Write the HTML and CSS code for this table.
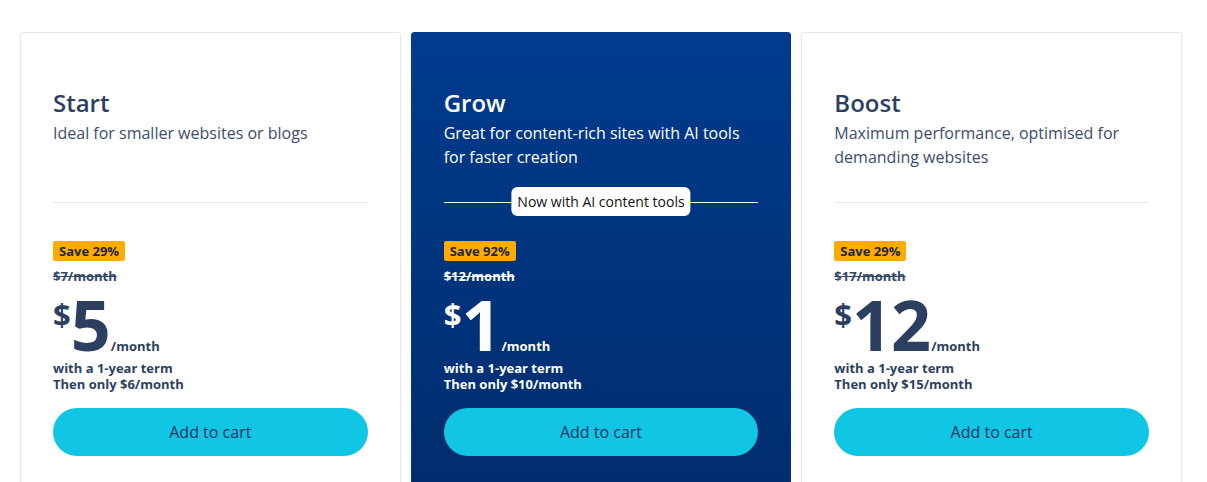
FILE: index.html
```html
<!DOCTYPE html>
<html lang="en">
<head>
<meta charset="utf-8">
<title>Plans</title>
<link rel="stylesheet" href="styles.css">
</head>
<body>
<main class="plans">
  <section class="card">
    <h3 class="title">Start</h3>
    <p class="desc">Ideal for smaller websites or blogs</p>
    <div class="divider"></div>
    <span class="badge">Save 29%</span>
    <p class="old">$7/month</p>
    <div class="price"><span class="cur">$</span><span class="amount">5</span><span class="per">/month</span></div>
    <p class="terms">with a 1-year term<br>Then only $6/month</p>
    <button class="cta">Add to cart</button>
  </section>
  <section class="card featured">
    <h3 class="title">Grow</h3>
    <p class="desc">Great for content-rich sites with AI tools for faster creation</p>
    <div class="divider labeled"><span class="tag">Now with AI content tools</span></div>
    <span class="badge">Save 92%</span>
    <p class="old">$12/month</p>
    <div class="price"><span class="cur">$</span><span class="amount">1</span><span class="per">/month</span></div>
    <p class="terms">with a 1-year term<br>Then only $10/month</p>
    <button class="cta">Add to cart</button>
  </section>
  <section class="card">
    <h3 class="title">Boost</h3>
    <p class="desc">Maximum performance, optimised for demanding websites</p>
    <div class="divider"></div>
    <span class="badge">Save 29%</span>
    <p class="old">$17/month</p>
    <div class="price"><span class="cur">$</span><span class="amount">12</span><span class="per">/month</span></div>
    <p class="terms">with a 1-year term<br>Then only $15/month</p>
    <button class="cta">Add to cart</button>
  </section>
</main>
</body>
</html>
```
FILE: styles.css
```css
html, body {
  margin: 0;
  padding: 0;
  background: #ffffff;
  font-family: "Open Sans", "Liberation Sans", sans-serif;
  color: #2c3f60;
  overflow: hidden;
}

.plans {
  display: grid;
  grid-template-columns: repeat(3, 1fr);
  gap: 10px;
  width: 1162px;
  padding: 32px 20px 0;
}

.card {
  display: flex;
  flex-direction: column;
  align-items: flex-start;
  padding: 55px 32px 60px;
  border: 1px solid #e6e8ec;
  border-radius: 3px;
  box-shadow: 0 1px 3px rgba(0, 0, 0, 0.06);
  background: #ffffff;
}

.featured {
  border-color: #003a8c;
  background: linear-gradient(180deg, #003b8e 0%, #002c6b 100%);
  color: #ffffff;
}

.title {
  margin: 0;
  font-size: 24px;
  line-height: 30px;
  font-weight: 600;
  color: #2c3f60;
}

.desc {
  margin: 3px 0 0;
  font-size: 16px;
  line-height: 24px;
  min-height: 48px;
  color: #3c4d6c;
}

.featured .title,
.featured .desc {
  color: #ffffff;
}

.divider {
  align-self: stretch;
  height: 1px;
  margin-top: 33px;
  background: #e6e8ec;
  position: relative;
}

.divider.labeled {
  background: #ffffff;
}

.tag {
  position: absolute;
  top: -15px;
  left: 50%;
  transform: translateX(-50%);
  background: #ffffff;
  color: #111111;
  font-size: 14px;
  line-height: 29px;
  padding: 0 6px;
  border-radius: 6px;
  white-space: nowrap;
}

.badge {
  margin-top: 38px;
  background: #ffab00;
  color: #1b2640;
  font-size: 13px;
  font-weight: 700;
  line-height: 20px;
  padding: 0 6px;
  border-radius: 2px;
}

.old {
  margin: 7px 0 0;
  font-size: 13px;
  font-weight: 700;
  line-height: 16px;
  text-decoration: line-through;
  color: #33476a;
}

.featured .old {
  color: #ffffff;
}

.price {
  display: flex;
  align-items: baseline;
  margin-top: 12px;
  font-weight: 700;
  color: #2c3f60;
}

.featured .price {
  color: #ffffff;
}

.cur {
  font-size: 31px;
  line-height: 1;
  align-self: flex-start;
  margin-top: 3px;
}

.amount {
  font-size: 70px;
  line-height: 56px;
  letter-spacing: -1px;
}

.per {
  font-size: 13px;
  line-height: 16px;
  margin-left: 1px;
}

.terms {
  margin: 6px 0 0;
  font-size: 13px;
  font-weight: 700;
  line-height: 16px;
  color: #2c3f60;
}

.featured .terms {
  color: #ffffff;
}

.cta {
  align-self: stretch;
  margin-top: 16px;
  height: 48px;
  border: none;
  border-radius: 24px;
  background: #11c6e4;
  color: #1b3262;
  font-family: "Open Sans", "Liberation Sans", sans-serif;
  font-size: 16px;
  font-weight: 500;
  cursor: pointer;
}
```
